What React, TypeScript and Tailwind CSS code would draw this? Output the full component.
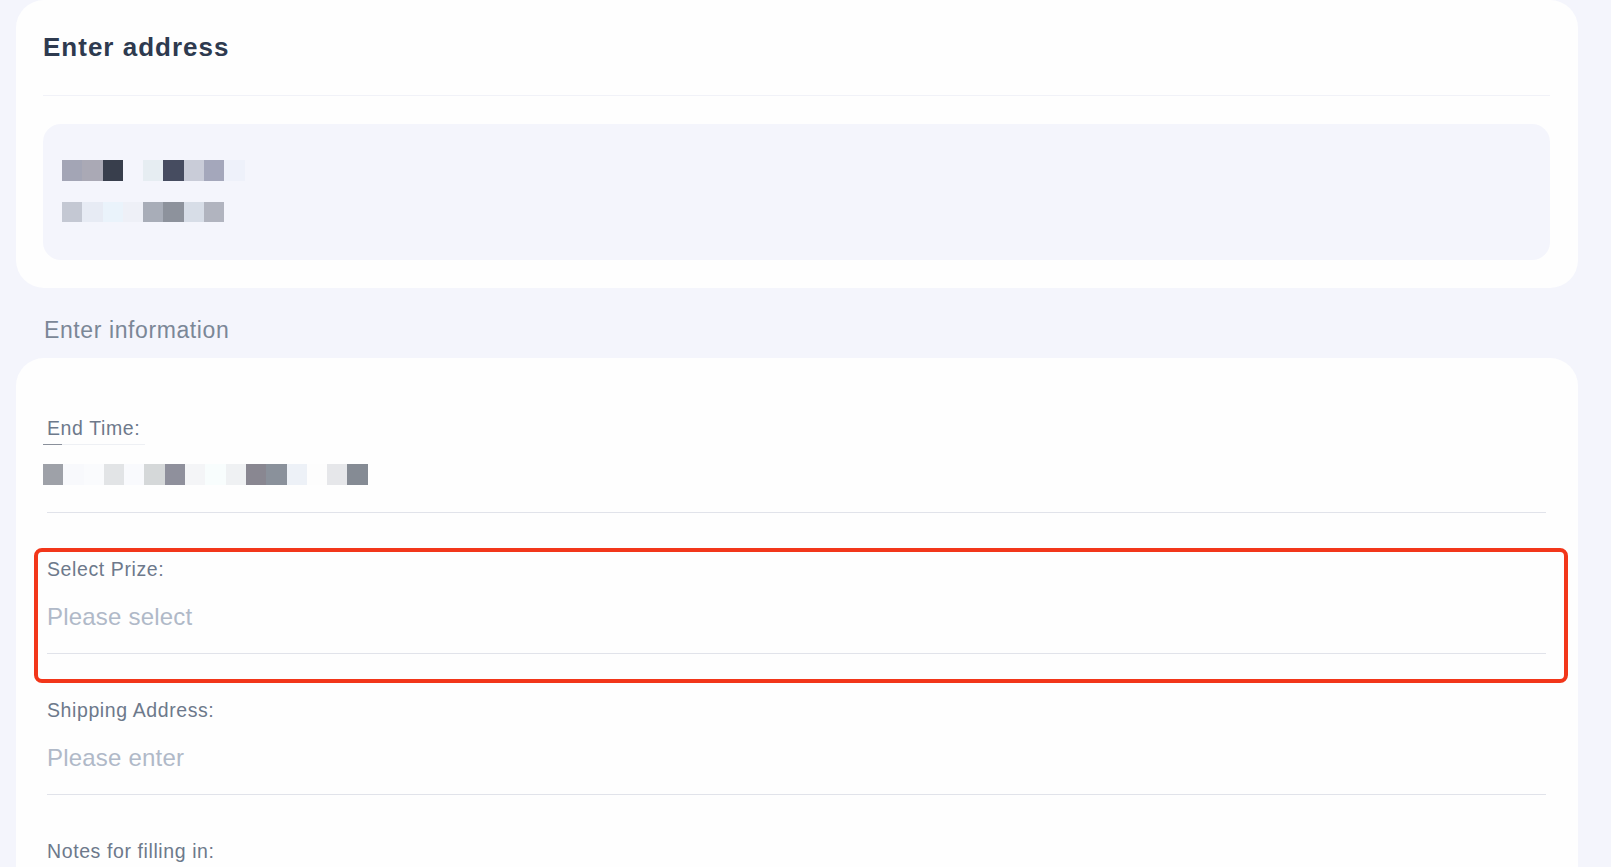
const font = { fontFamily: '"Liberation Sans", Arial, sans-serif' };

const addrRow1 = ["#a3a5b5", "#aaa9b5", "#383e4c", "transparent", "#e6edf2", "#464c60", "#c9ccd8", "#a4a7bb", "#eef1fa"];
const addrRow2 = ["#c4c8d3", "#e7ebf4", "#eaf3fb", "#eef0f7", "#a8adb8", "#8d929c", "#d7dde7", "#b1b4bf"];
const timeRow = [
  "#9ea1a8", "#f8f9fc", "#fafbfd", "#e2e4e6", "#f9fafd", "#d5d8d9", "#8f909c", "#f4f5f7",
  "#f8fdfd", "#eff1f3", "#898791", "#8a919b", "#edf1f7", "#fdfdfd", "#e6e7ea", "#858b94",
];

function Blocks({ colors, h = "h-[21px]" }: { colors: string[]; h?: string }) {
  return (
    <div className="flex">
      {colors.map((c, i) => (
        <div key={i} className={`w-[20.3px] ${h}`} style={{ background: c }} />
      ))}
    </div>
  );
}

function Field({
  label,
  placeholder,
  children,
  highlight,
  underline,
}: {
  label: string;
  placeholder?: string;
  children?: React.ReactNode;
  highlight?: boolean;
  underline?: boolean;
}) {
  return (
    <div className="relative mb-[44px]">
      {highlight && (
        <div className="pointer-events-none absolute -left-[13px] -right-[22px] -top-[9px] -bottom-[29px] rounded-[8px] border-[4px] border-[#f2361a]" />
      )}
      <div className="relative text-[19.5px] leading-[24px] tracking-[0.6px] text-[#6d798b]">
        {label}
        {underline && (
          <div className="absolute left-[-4px] top-[28px] flex h-px w-[102px]">
            <div className="w-[19px] bg-[#8a909b]" />
            <div className="flex-1 bg-[#eef0f4]" />
          </div>
        )}
      </div>
      <div className="mt-[20px] flex h-[32px] items-center">
        {children ?? (
          <span className="text-[24px] leading-[32px] tracking-[0.2px] text-[#b0b9c8]">{placeholder}</span>
        )}
      </div>
      <div className="mt-[20px] h-px bg-[#e1e3ea]" />
    </div>
  );
}

export default function App() {
  return (
    <div className="min-h-[867px] overflow-hidden bg-[#f4f5fc] pl-[16px] pr-[33px]" style={font}>
      {/* Address card */}
      <div className="rounded-[28px] bg-[#fefefe] pl-[27px] pr-[28px] pb-[28px]">
        <h2 className="border-b border-[#f1f2f8] pt-[29px] pb-[30px] text-[26px] font-bold leading-[36px] tracking-[1px] text-[#2e3a4f]">
          Enter address
        </h2>
        <div className="mt-[28px] h-[136px] rounded-[18px] bg-[#f4f5fc] pl-[19px] pt-[36px]">
          <Blocks colors={addrRow1} />
          <div className="mt-[21px]">
            <Blocks colors={addrRow2} h="h-[20px]" />
          </div>
        </div>
      </div>

      {/* Section heading */}
      <div className="pl-[28px] pt-[27px] pb-[13px] text-[23px] leading-[30px] tracking-[0.6px] text-[#7b8797]">
        Enter information
      </div>

      {/* Info card */}
      <div className="rounded-t-[28px] bg-[#fefefe] pl-[31px] pr-[32px] pt-[58px]">
        <Field label="End Time:" underline>
          <div className="-ml-[4px] -mt-[3px]">
            <Blocks colors={timeRow} />
          </div>
        </Field>
        <Field label="Select Prize:" placeholder="Please select" highlight />
        <Field label="Shipping Address:" placeholder="Please enter" />
        <div className="text-[19.5px] leading-[24px] tracking-[0.6px] text-[#6d798b]">Notes for filling in:</div>
        <div className="h-[40px]" />
      </div>
    </div>
  );
}
